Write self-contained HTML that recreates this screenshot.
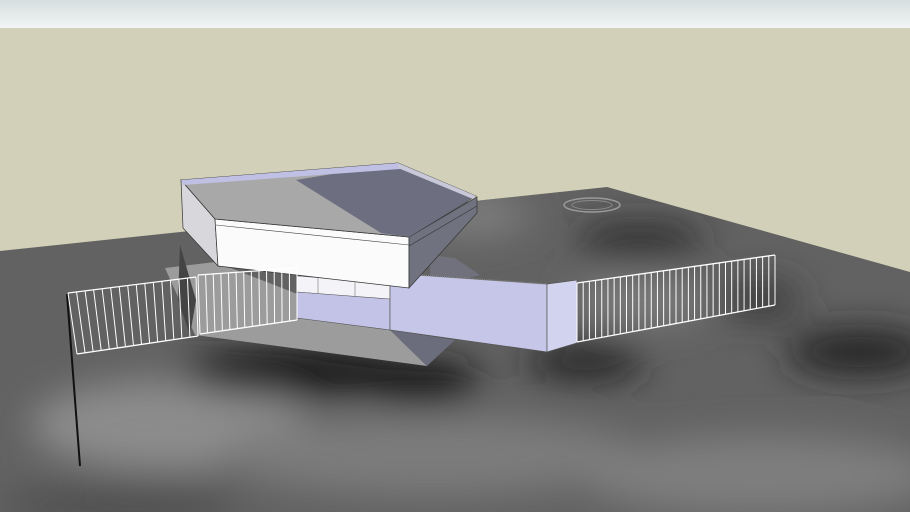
<!DOCTYPE html>
<html><head><meta charset="utf-8"><style>html,body{margin:0;padding:0;width:910px;height:512px;overflow:hidden;background:#d2d0b8}</style></head>
<body>
<svg id="s" width="910" height="512" viewBox="0 0 910 512" xmlns="http://www.w3.org/2000/svg">
<defs>
<linearGradient id="sky" x1="0" y1="0" x2="0" y2="1"><stop offset="0" stop-color="#d5dfdf"/><stop offset="0.9" stop-color="#eef2f2"/><stop offset="1" stop-color="#f4f6f6"/></linearGradient>
<filter id="b" x="-50%" y="-50%" width="200%" height="200%"><feGaussianBlur stdDeviation="18"/></filter>
<clipPath id="g"><polygon points="0,251 607,187 910,272 910,512 0,512"/></clipPath>
</defs>
<rect x="0" y="0" width="910" height="28" fill="url(#sky)"/>
<rect x="0" y="28" width="910" height="484" fill="#d2d0b8"/>
<g clip-path="url(#g)">
<rect x="0" y="180" width="910" height="332" fill="#626262"/>
<g filter="url(#b)">
<ellipse cx="170" cy="425" rx="140" ry="45" fill="#8c8c8c"/>
<ellipse cx="430" cy="455" rx="210" ry="40" fill="#7c7c7c"/>
<ellipse cx="760" cy="475" rx="180" ry="40" fill="#7e7e7e"/>
<ellipse cx="640" cy="300" rx="70" ry="25" fill="#7a7a7a"/>
<ellipse cx="470" cy="215" rx="60" ry="20" fill="#808080"/>
<ellipse cx="300" cy="372" rx="120" ry="24" fill="#141414"/>
<ellipse cx="420" cy="382" rx="60" ry="22" fill="#181818"/>
<ellipse cx="585" cy="362" rx="60" ry="18" fill="#222"/>
<ellipse cx="860" cy="352" rx="75" ry="22" fill="#222"/>
<ellipse cx="640" cy="240" rx="65" ry="15" fill="#262626"/>
<ellipse cx="760" cy="300" rx="40" ry="18" fill="#383838"/>
<ellipse cx="120" cy="505" rx="120" ry="20" fill="#505050"/>
</g>
</g>
<ellipse cx="592" cy="205" rx="28" ry="7" fill="none" stroke="#9a9a9a" stroke-width="1.5"/>
<ellipse cx="592" cy="205" rx="20" ry="4.5" fill="none" stroke="#8a8a8a" stroke-width="1"/>
<line x1="67" y1="294" x2="80" y2="466" stroke="#111" stroke-width="2"/>
<polygon points="165,268 215,262 390,330 427,366 195,335" fill="#9c9c9c"/>
<polygon points="390,330 455,340 427,366" fill="#6c6d7c"/>
<polygon points="180,245 178,300 190,335 196,300" fill="#444"/>
<polygon points="430,255 455,258 480,275 430,290" fill="#70717c"/>
<polygon points="297,276 390,283 390,300 297,292" fill="#f4f4f8" stroke="#777" stroke-width="0.6"/>
<line x1="318" y1="278" x2="318" y2="294" stroke="#888" stroke-width="0.7"/>
<line x1="355" y1="280" x2="355" y2="297" stroke="#888" stroke-width="0.7"/>
<polygon points="297,292 390,299 390,330 297,318" fill="#c2c3e6" stroke="#555" stroke-width="0.6"/>
<polygon points="390,273 547,284 547,352 390,330" fill="#c6c7e8" stroke="#555" stroke-width="0.7"/>
<polygon points="547,284 577,280 577,343 547,352" fill="#d2d3ee" stroke="#555" stroke-width="0.7"/>
<line x1="390" y1="273" x2="547" y2="284" stroke="#888" stroke-width="1.5" stroke-dasharray="1,1"/>
<polygon points="181,180 215,219 218,266 183,228" fill="#d8d8dc" stroke="#333" stroke-width="0.7"/>
<polygon points="215,219 409,237 409,288 218,266" fill="#fbfbfb" stroke="#333" stroke-width="0.7"/>
<line x1="216" y1="225" x2="409" y2="245" stroke="#444" stroke-width="0.6"/>
<polygon points="409,237 477,197 477,213 409,288" fill="#70727f" stroke="#333" stroke-width="0.7"/>
<line x1="409" y1="246" x2="477" y2="206" stroke="#333" stroke-width="0.6"/>
<polygon points="181,180 398,163 476,196 409,237 215,219" fill="#a8a8a8" stroke="#333" stroke-width="0.7"/>
<polygon points="296,180 398,163 476,196 409,237 381,233" fill="#6d6f80"/>
<polygon points="181,180 398,163 400,169 183,185" fill="#c0c0e4"/>
<polygon points="398,163 476,196 473,199 398,168" fill="#c8c8d8"/>
<g id="f" stroke="#fff" stroke-width="1.3" fill="none"></g>
</svg>
<script>
var f=document.getElementById('f'),ns='http://www.w3.org/2000/svg';
function L(a,b,c,d,w){var l=document.createElementNS(ns,'line');l.setAttribute('x1',a);l.setAttribute('y1',b);l.setAttribute('x2',c);l.setAttribute('y2',d);if(w)l.setAttribute('stroke-width',w);f.appendChild(l);}
function fence(tx1,ty1,tx2,ty2,bx1,by1,bx2,by2,n){
L(tx1,ty1,tx2,ty2);L(bx1,by1,bx2,by2);
for(var i=0;i<=n;i++){var t=i/n;L(tx1+(tx2-tx1)*t,ty1+(ty2-ty1)*t,bx1+(bx2-bx1)*t,by1+(by2-by1)*t,1);}
}
fence(68,293,196,277,77,354,198,336,15);
fence(198,275,297,268,200,334,297,320,13);
fence(577,283,775,255,577,342,775,305,32);
</script>
</body></html>
